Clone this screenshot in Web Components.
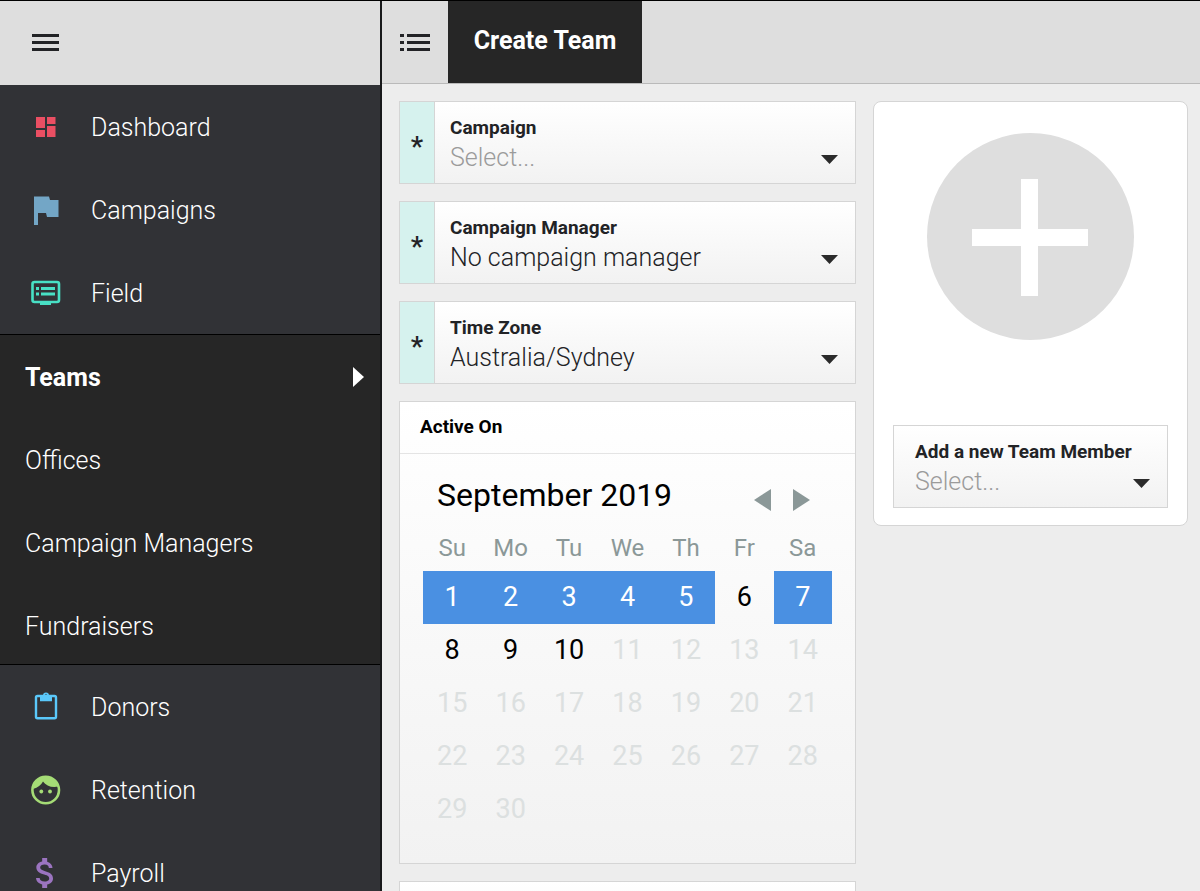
<!DOCTYPE html>
<html lang="en">
<head>
<meta charset="utf-8">
<meta name="viewport" content="width=device-width, initial-scale=1">
<title>Create Team</title>
<style>
    body {
        margin: 0;
        height: 100vh;
        overflow: hidden;
        background: #ededed;
        color: #222326;
        font-family: Roboto, "Open Sans", sans-serif;
    }
</style>
</head>
<body>
<app-layout>
    <side-nav slot="nav">
        <nav-item icon="dashboard">Dashboard</nav-item>
        <nav-item icon="flag">Campaigns</nav-item>
        <nav-item icon="field">Field</nav-item>
        <nav-group>
            <nav-item active>Teams</nav-item>
            <nav-item>Offices</nav-item>
            <nav-item>Campaign Managers</nav-item>
            <nav-item>Fundraisers</nav-item>
        </nav-group>
        <nav-item icon="clipboard">Donors</nav-item>
        <nav-item icon="face">Retention</nav-item>
        <nav-item icon="dollar">Payroll</nav-item>
    </side-nav>

    <tab-bar slot="top">Create Team</tab-bar>

    <select-field slot="form" required label="Campaign" placeholder="Select..."></select-field>
    <select-field slot="form" required label="Campaign Manager" value="No campaign manager"></select-field>
    <select-field slot="form" required label="Time Zone" value="Australia/Sydney"></select-field>
    <panel-box slot="form" heading="Active On">
        <date-picker heading="September 2019" days="30" last="10" selected="1,2,3,4,5,7"></date-picker>
    </panel-box>
    <panel-box slot="form"></panel-box>

    <member-card slot="members">
        <select-field wide label="Add a new Team Member" placeholder="Select..."></select-field>
    </member-card>
</app-layout>

<script>
const ICONS = {
    menu: '<path d="M1 6h27v3H1zM1 13h27v3H1zM1 20h27v3H1z"/>',
    list: '<path d="M0 6h4v3H0zM7 6h23v3H7zM0 13h4v3H0zM7 13h23v3H7zM0 20h4v3H0zM7 20h23v3H7z"/>',
    dashboard: '<path d="M5 5h9v11H5zM5 18h9v7H5zM16 5h8.500v7H16zM16 14h8.500v11H16z"/>',
    flag: '<path d="M3 1.500h15l1 3.500h8.500v17H16l-1-4H7v12H3z"/>',
    field: `<rect x="1.500" y="4" width="26.500" height="20" rx="2" fill="none" stroke="currentColor" stroke-width="2.600"/>
        <path d="M9 24h11v3H9zM5 9h3v3H5zM10 9h14v3H10zM5 14.500h3v3H5zM10 14.500h14v3H10z"/>`,
    clipboard: `<rect x="5" y="4" width="20" height="22.300" rx="1.500" fill="none" stroke="currentColor" stroke-width="2.400"/>
        <path fill-rule="evenodd" d="M9 3.500h3a3 3 0 0 1 6 0h3V9.200H9zM15 2.200a1.300 1.300 0 1 0 0 2.600a1.300 1.300 0 0 0 0-2.600z"/>`,
    face: `<circle cx="14.700" cy="15" r="13.300" fill="none" stroke="currentColor" stroke-width="2.600"/>
        <path d="M2 14C3 6 8 1.500 15 1.500S26.500 6 27.500 11.500C21 13 15 11 12 6.500C10 10 7 12.500 2 14z"/>
        <circle cx="10.300" cy="16.500" r="1.900"/><circle cx="19" cy="16.500" r="1.900"/>`,
    dollar: `<path transform="translate(-5.500 -5) scale(1.667)" d="M11.800 10.900c-2.270-.590-3-1.200-3-2.150 0-1.090 1.010-1.850 2.700-1.850 1.780 0 2.440.850 2.500 2.100h2.210c-.070-1.720-1.120-3.300-3.210-3.810V3h-3v2.160c-1.940.420-3.500 1.680-3.500 3.610 0 2.310 1.910 3.460 4.700 4.130 2.500.600 3 1.480 3 2.410 0 .690-.490 1.790-2.700 1.790-2.060 0-2.870-.920-2.980-2.100h-2.200c.120 2.190 1.760 3.420 3.680 3.830V21h3v-2.150c1.950-.370 3.500-1.500 3.500-3.550 0-2.840-2.430-3.810-4.700-4.400z"/>`
};

const ICON_COLORS = {
    dashboard: '#ea4f63',
    flag: '#73a6c6',
    field: '#48e0c5',
    clipboard: '#5ac8fa',
    face: '#a5dc76',
    dollar: '#9b74c0'
};

function icon(name) {
    return `<svg width="30" height="30" viewBox="0 0 30 30" fill="currentColor" aria-hidden="true">${ICONS[name]}</svg>`;
}

class AppLayout extends HTMLElement {
    constructor() {
        super();
        this.attachShadow({ mode: 'open' }).innerHTML = `
        <style>
        :host {
            display: grid;
            grid-template-columns: 380px minmax(0, 1fr);
            grid-template-rows: minmax(0, 1fr);
            height: 100vh;
            box-sizing: border-box;
            border-top: 1px solid #000;
        }

        .content {
            overflow: hidden;
            border-left: 2px solid #18191b;
        }

        .columns {
            display: grid;
            grid-template-columns: minmax(0, 1fr) 315px;
            align-items: start;
            gap: 17px;
            padding: 17px 12px 17px 17px;
        }

        .form {
            display: grid;
            gap: 17px;
        }
        </style>
        <slot name="nav"></slot>
        <main class="content">
            <slot name="top"></slot>
            <div class="columns">
                <div class="form"><slot name="form"></slot></div>
                <slot name="members"></slot>
            </div>
        </main>`;
    }
}

class SideNav extends HTMLElement {
    constructor() {
        super();
        this.attachShadow({ mode: 'open' }).innerHTML = `
        <style>
        :host {
            display: block;
            min-height: 0;
            overflow: hidden;
            background: #313236;
        }

        .top {
            display: flex;
            align-items: center;
            height: 84px;
            padding-left: 31px;
            background: #dedede;
        }

        button {
            display: flex;
            padding: 0;
            border: 0;
            background: none;
            color: #222326;
        }
        </style>
        <div class="top"><button type="button" aria-label="Menu">${icon('menu')}</button></div>
        <nav><slot></slot></nav>`;
    }
}

class NavGroup extends HTMLElement {
    constructor() {
        super();
        this.attachShadow({ mode: 'open' }).innerHTML = `
        <style>
        :host {
            display: grid;
            gap: 41px;
            padding: 21px 0 17px;
            border-top: 1px solid #000;
            border-bottom: 1px solid #000;
            background: #262626;
            --row-height: 42px;
            --row-indent: 25px;
        }
        </style>
        <slot></slot>`;
    }
}

class NavItem extends HTMLElement {
    constructor() {
        super();
        const name = this.getAttribute('icon');
        const arrow = '<svg class="arrow" width="11" height="20" viewBox="0 0 11 20" fill="currentColor" aria-hidden="true"><path d="M0 0L11 10L0 20z"/></svg>';

        this.attachShadow({ mode: 'open' }).innerHTML = `
        <style>
        :host {
            display: block;
        }

        a {
            display: flex;
            align-items: center;
            gap: 30px;
            height: var(--row-height, 83px);
            padding: 0 16px 0 var(--row-indent, 31px);
            color: #fff;
            font-size: 25px;
            font-weight: 300;
            line-height: 30px;
            text-decoration: none;
        }

        a[aria-current] {
            font-weight: 700;
        }

        .icon {
            display: flex;
            color: ${ICON_COLORS[name] || 'inherit'};
        }

        .text {
            padding-top: 2px;
        }

        .arrow {
            margin-left: auto;
        }
        </style>
        <a href="#" ${this.hasAttribute('active') ? 'aria-current="page"' : ''}>
            ${name ? `<span class="icon">${icon(name)}</span>` : ''}
            <span class="text"><slot></slot></span>
            ${this.hasAttribute('active') ? arrow : ''}
        </a>`;
    }
}

class TabBar extends HTMLElement {
    constructor() {
        super();
        this.attachShadow({ mode: 'open' }).innerHTML = `
        <style>
        :host {
            display: flex;
            height: 82px;
            border-bottom: 1px solid #bababa;
            background: #dedede;
        }

        button {
            border: 0;
            font: inherit;
        }

        .list {
            display: flex;
            align-items: center;
            padding: 2px 18px 0;
            background: none;
            color: #222326;
        }

        .tab {
            min-width: 194px;
            padding: 0 24px 4px;
            background: #262626;
            color: #fff;
            font-size: 25px;
            font-weight: 700;
        }
        </style>
        <button class="list" type="button" aria-label="List">${icon('list')}</button>
        <button class="tab" type="button"><slot></slot></button>`;
    }
}

class SelectField extends HTMLElement {
    constructor() {
        super();
        const value = this.getAttribute('value');
        this.attachShadow({ mode: 'open' }).innerHTML = `
        <style>
        :host {
            display: flex;
            border: 1px solid #d5d5d5;
            background: linear-gradient(#fff, #f2f2f2);
        }

        .mark {
            display: flex;
            align-items: center;
            justify-content: center;
            width: 35px;
            padding-top: 8px;
            box-sizing: border-box;
            border-right: 1px solid #d5d5d5;
            background: #d6f2ee;
            font-size: 28px;
            font-weight: 500;
        }

        .body {
            flex: 1;
            display: grid;
            gap: 6px;
            min-width: 0;
            padding: 16px 17px 11px ${this.hasAttribute('wide') ? 21 : 15}px;
        }

        label {
            font-size: 19px;
            font-weight: 700;
            line-height: 20px;
            white-space: nowrap;
        }

        .control {
            display: grid;
            align-items: center;
        }

        select, svg {
            grid-area: 1 / 1;
        }

        select {
            appearance: none;
            width: 100%;
            height: 28px;
            margin: 0;
            padding: 0 24px 0 0;
            border: 0;
            background: none;
            color: ${value ? '#222326' : '#9b9b9b'};
            font: 300 25px/28px Roboto, sans-serif;
        }

        svg {
            justify-self: end;
            margin-top: 3px;
            pointer-events: none;
        }
        </style>
        ${this.hasAttribute('required') ? '<span class="mark">*</span>' : ''}
        <div class="body">
            <label for="field">${this.getAttribute('label')}</label>
            <div class="control">
                <select id="field"><option>${value || this.getAttribute('placeholder')}</option></select>
                <svg width="17" height="9" viewBox="0 0 17 9" fill="#2b2b2b" aria-hidden="true"><path d="M0 0h17L8.500 9z"/></svg>
            </div>
        </div>`;
    }
}

class PanelBox extends HTMLElement {
    constructor() {
        super();
        const heading = this.getAttribute('heading');
        this.attachShadow({ mode: 'open' }).innerHTML = `
        <style>
        :host {
            display: block;
            min-height: 83px;
            border: 1px solid #d5d5d5;
            background: linear-gradient(#fff, #f2f2f2);
        }

        h2 {
            margin: 0;
            padding: 13px 20px 14px;
            border-bottom: 1px solid #e4e4e4;
            color: #000;
            font-size: 19px;
            font-weight: 700;
            line-height: 24px;
        }
        </style>
        ${heading ? `<h2>${heading}</h2>` : ''}
        <slot></slot>`;
    }
}

class DatePicker extends HTMLElement {
    constructor() {
        super();
        const days = Number(this.getAttribute('days'));
        const last = Number(this.getAttribute('last'));
        const selected = this.getAttribute('selected').split(',').map(Number);

        let rows = '';
        for (let start = 1; start <= days; start += 7) {
            rows += '<tr>';
            for (let day = start; day < start + 7 && day <= days; day++) {
                const state = day > last ? 'disabled' : `aria-pressed="${selected.includes(day)}"`;
                rows += `<td><button type="button" ${state}>${day}</button></td>`;
            }
            rows += '</tr>';
        }

        this.attachShadow({ mode: 'open' }).innerHTML = `
        <style>
        :host {
            display: block;
            padding: 0 23px 27px;
            color: #000;
        }

        header {
            display: flex;
            align-items: flex-end;
            justify-content: space-between;
            padding: 23px 22px 11px 14px;
        }

        h3 {
            margin: 0;
            font-size: 32px;
            font-weight: 400;
            line-height: 36px;
        }

        .arrows {
            display: flex;
            gap: 22px;
        }

        button {
            margin: 0;
            padding: 0;
            border: 0;
            background: none;
            color: inherit;
            font: inherit;
        }

        .arrows button {
            display: flex;
            align-items: center;
            height: 26px;
            color: #8b9898;
        }

        table {
            width: 100%;
            table-layout: fixed;
            border-collapse: collapse;
        }

        th, td {
            padding: 0;
            text-align: center;
        }

        th {
            height: 47px;
            color: #8b9898;
            font-size: 24px;
            font-weight: 400;
        }

        td {
            height: 53px;
            font-size: 27px;
        }

        td button {
            display: block;
            width: 100%;
            height: 53px;
            padding-bottom: 2px;
        }

        td button[aria-pressed="true"] {
            background: #4a90e2;
            color: #fff;
        }

        td button:disabled {
            color: #dce0e0;
        }
        </style>
        <header>
            <h3>${this.getAttribute('heading')}</h3>
            <div class="arrows">
                <button type="button" aria-label="Previous month"><svg width="17" height="22" viewBox="0 0 17 22" fill="currentColor"><path d="M17 0v22L0 11z"/></svg></button>
                <button type="button" aria-label="Next month"><svg width="17" height="22" viewBox="0 0 17 22" fill="currentColor"><path d="M0 0v22l17-11z"/></svg></button>
            </div>
        </header>
        <table>
            <thead><tr>${['Su', 'Mo', 'Tu', 'We', 'Th', 'Fr', 'Sa'].map(d => `<th>${d}</th>`).join('')}</tr></thead>
            <tbody>${rows}</tbody>
        </table>`;
    }
}

class MemberCard extends HTMLElement {
    constructor() {
        super();
        this.attachShadow({ mode: 'open' }).innerHTML = `
        <style>
        :host {
            display: grid;
            gap: 85px;
            padding: 31px 19px 17px;
            border: 1px solid #d5d5d5;
            border-radius: 8px;
            background: #fff;
        }

        svg {
            display: block;
            margin: 0 auto;
        }
        </style>
        <svg width="207" height="207" viewBox="0 0 207 207" aria-hidden="true">
            <circle cx="103.500" cy="103.500" r="103.500" fill="#dedede"/>
            <path fill="#fff" d="M94 46h17v50h50v17h-50v50H94v-50H45V96h49z"/>
        </svg>
        <slot></slot>`;
    }
}

customElements.define('app-layout', AppLayout);
customElements.define('side-nav', SideNav);
customElements.define('nav-group', NavGroup);
customElements.define('nav-item', NavItem);
customElements.define('tab-bar', TabBar);
customElements.define('select-field', SelectField);
customElements.define('panel-box', PanelBox);
customElements.define('date-picker', DatePicker);
customElements.define('member-card', MemberCard);
</script>
</body>
</html>
